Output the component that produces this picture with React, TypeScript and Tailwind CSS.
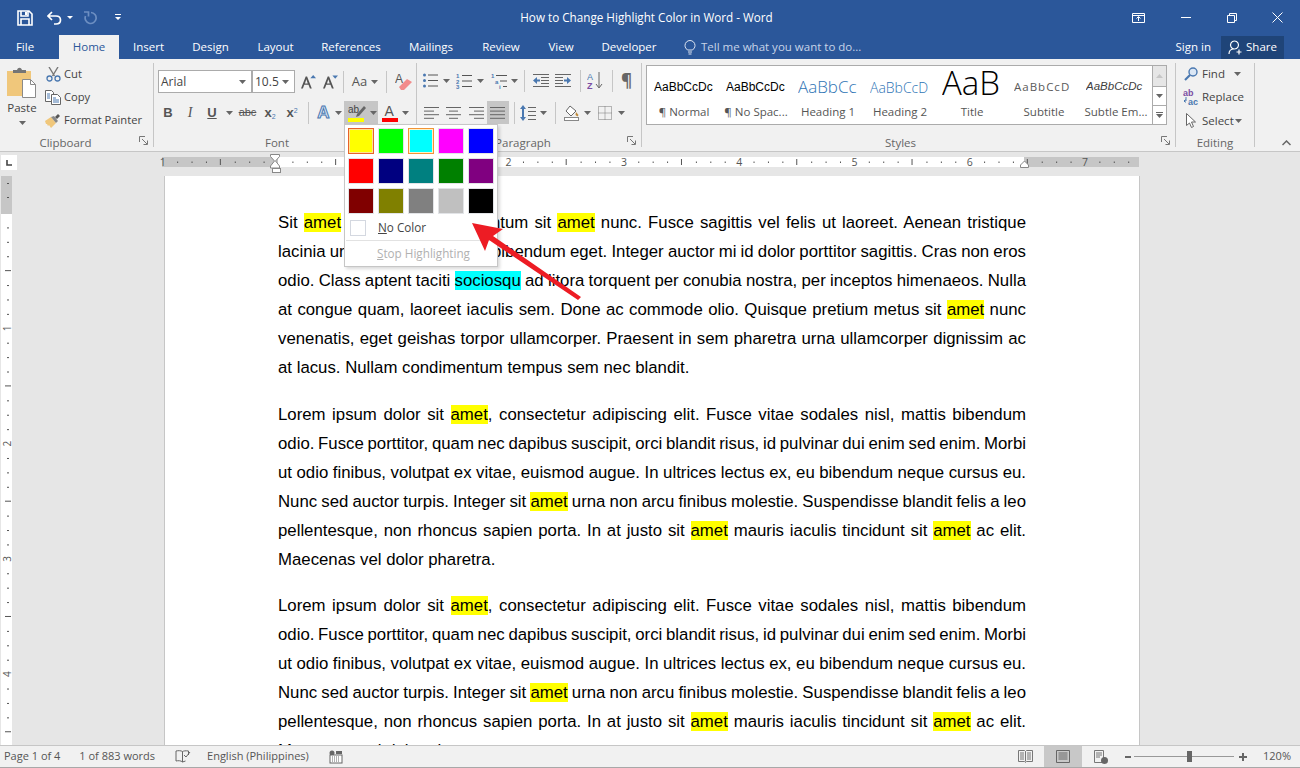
import type { ReactNode } from "react"

const ui = "font-['Open_Sans',sans-serif]"

const tabs = [
  { label: "Insert", w: "w-[59px]" },
  { label: "Design", w: "w-[65px]" },
  { label: "Layout", w: "w-[65px]" },
  { label: "References", w: "w-[86px]" },
  { label: "Mailings", w: "w-[74px]" },
  { label: "Review", w: "w-[66px]" },
  { label: "View", w: "w-[54px]" },
  { label: "Developer", w: "w-[82px]" },
]

const swatches = [
  "#ffff00", "#00ff00", "#00ffff", "#ff00ff", "#0000ff",
  "#ff0000", "#000080", "#008080", "#008000", "#800080",
  "#800000", "#808000", "#808080", "#c0c0c0", "#000000",
]

const para1 = [
  "Sit amet massa an condimentum sit amet nunc. Fusce sagittis vel felis ut laoreet. Aenean tristique",
  "lacinia urna, vitae dictum est bibendum eget. Integer auctor mi id dolor porttitor sagittis. Cras non eros",
  "odio. Class aptent taciti sociosqu ad litora torquent per conubia nostra, per inceptos himenaeos. Nulla",
  "at congue quam, laoreet iaculis sem. Done ac commode olio. Quisque pretium metus sit amet nunc",
  "venenatis, eget geishas torpor ullamcorper. Praesent in sem pharetra urna ullamcorper dignissim ac",
  "at lacus. Nullam condimentum tempus sem nec blandit.",
]

const para2 = [
  "Lorem ipsum dolor sit amet, consectetur adipiscing elit. Fusce vitae sodales nisl, mattis bibendum",
  "odio. Fusce porttitor, quam nec dapibus suscipit, orci blandit risus, id pulvinar dui enim sed enim. Morbi",
  "ut odio finibus, volutpat ex vitae, euismod augue. In ultrices lectus ex, eu bibendum neque cursus eu.",
  "Nunc sed auctor turpis. Integer sit amet urna non arcu finibus molestie. Suspendisse blandit felis a leo",
  "pellentesque, non rhoncus sapien porta. In at justo sit amet mauris iaculis tincidunt sit amet ac elit.",
  "Maecenas vel dolor pharetra.",
]

function Caret({ className = "" }: { className?: string }) {
  return (
    <svg width="7" height="4" viewBox="0 0 7 4" className={className}>
      <path d="M0 0h7L3.5 4z" fill="#666" />
    </svg>
  )
}

function Sep() {
  return <div className="mx-[5px] h-[22px] w-px bg-[#c6c6c6]" />
}

function Launcher() {
  return (
    <svg width="9" height="9" viewBox="0 0 9 9" className="absolute right-[5px] top-[3px]">
      <path d="M0.5 6V.5H6M3 3l5 5M8.5 4.5v4h-4" fill="none" stroke="#777" />
    </svg>
  )
}

function Group({ w, label, labelOffset = "", children }: { w: string; label: string; labelOffset?: string; children: ReactNode }) {
  return (
    <div className={`${w} relative mt-[4px] h-[84px] shrink-0 border-r border-[#c6c6c6]`}>
      <div className="h-[73px]">{children}</div>
      <div className={`${labelOffset} relative h-[14px] text-center text-[11.5px] leading-[14px] text-[#666]`}>
        {label}
      </div>
      {label !== "Editing" && <div className="absolute bottom-0 right-0 h-[14px] w-[14px]"><Launcher /></div>}
    </div>
  )
}

function Slot({ w = "w-[22px]", children }: { w?: string; children: ReactNode }) {
  return <div className={`${w} flex h-[23px] shrink-0 items-center justify-center`}>{children}</div>
}

function SmallRow({ icon, label, h }: { icon: ReactNode; label: string; h: string }) {
  return (
    <div className={`${h} flex items-center`}>
      <div className="flex w-[18px] justify-center">{icon}</div>
      <span className="ml-[2px] text-[11.2px] text-[#444]">{label}</span>
    </div>
  )
}

function PasteIcon() {
  return (
    <svg width="30" height="31" viewBox="0 0 30 31">
      <rect x="0" y="4" width="24" height="25" fill="#f0c77b" />
      <path d="M6 6V3h4c1-3 4-3 5 0h4v3z" fill="#757575" />
      <path d="M15.500 12.500h8l5 5v13h-13z" fill="#fff" stroke="#8a8a8a" />
      <path d="M23.500 12.500v5h5" fill="none" stroke="#8a8a8a" />
    </svg>
  )
}

function ScissorsIcon() {
  return (
    <svg width="15" height="15" viewBox="0 0 15 15">
      <path d="M3 0l5.500 9M12 0L6.500 9" stroke="#777" strokeWidth="1.400" fill="none" />
      <circle cx="3.500" cy="11.500" r="2.500" fill="none" stroke="#4a78b0" strokeWidth="1.300" />
      <circle cx="11.500" cy="11.500" r="2.500" fill="none" stroke="#4a78b0" strokeWidth="1.300" />
    </svg>
  )
}

function CopyIcon() {
  return (
    <svg width="16" height="15" viewBox="0 0 16 15">
      <path d="M.5.500h6l2 2v9H.5z" fill="#fff" stroke="#666" />
      <path d="M6.500 4.500h6l3 3v7h-9z" fill="#fff" stroke="#666" />
      <path d="M2 4h3M2 6h3M2 8h3M8 8h3M8 10h6M8 12h6" stroke="#4a78b0" />
    </svg>
  )
}

function BrushIcon() {
  return (
    <svg width="16" height="15" viewBox="0 0 16 15">
      <path d="M0 8l6-4 5 6-5 5-2-3-1 1-1-2-1 0z" fill="#f0c77b" />
      <path d="M6 4l5 6 2-2-4-5z" fill="#888" />
      <path d="M10 4l3-3 2 2-3 3z" fill="#555" />
    </svg>
  )
}

function FontBox({ w, value }: { w: string; value: string }) {
  return (
    <div className={`${w} flex h-[23px] items-center justify-between border border-[#ababab] bg-white pl-[2px] pr-[5px] text-[12px]`}>
      <span className="text-[#444]">{value}</span>
      <Caret />
    </div>
  )
}

function GrowFont({ up }: { up: boolean }) {
  return (
    <svg width="15" height="16" viewBox="0 0 16 16">
      <path d="M0 15L5 2h1.500l5 13h-2L8 11H3.500L2 15zM4.200 9.500h3L5.700 5z" fill="#555" />
      {up ? <path d="M10 4l3-3.500L16 4z" fill="#4a78b0" /> : <path d="M10 1h6l-3 3.500z" fill="#4a78b0" />}
    </svg>
  )
}

function HighlightIcon() {
  return (
    <svg width="18" height="20" viewBox="0 0 18 20">
      <text x="0" y="10" fontFamily="Liberation Sans, sans-serif" fontSize="10" fill="#444">ab</text>
      <path d="M9 11l7-8 2 2-7 8-3 1z" fill="#666" />
      <rect x="0" y="15" width="16" height="4" fill="#ffff00" />
    </svg>
  )
}

function Lines({ rows, w = 16 }: { rows: [number, number][]; w?: number }) {
  return (
    <svg width={w} height="14" viewBox={`0 0 ${w} 14`}>
      {rows.map(([a, b], i) => (
        <path key={i} d={`M${a} ${1.5 + i * 3.6}H${b}`} stroke="#666" strokeWidth="1" />
      ))}
    </svg>
  )
}

function BulletsIcon() {
  return (
    <svg width="15" height="15" viewBox="0 0 15 15">
      <circle cx="1.500" cy="2" r="1.500" fill="#4a78b0" /><circle cx="1.500" cy="7.500" r="1.500" fill="#4a78b0" /><circle cx="1.500" cy="13" r="1.500" fill="#4a78b0" />
      <path d="M5 2h10M5 7.500h10M5 13h10" stroke="#555" />
    </svg>
  )
}

function NumberIcon() {
  return (
    <svg width="16" height="16" viewBox="0 0 16 16">
      <text x="0" y="5" fontSize="6" fontWeight="700" fill="#4a78b0" fontFamily="Liberation Sans">1</text>
      <text x="0" y="10.500" fontSize="6" fontWeight="700" fill="#4a78b0" fontFamily="Liberation Sans">2</text>
      <text x="0" y="16" fontSize="6" fontWeight="700" fill="#4a78b0" fontFamily="Liberation Sans">3</text>
      <path d="M6 2.500h10M6 8h10M6 13.500h10" stroke="#555" />
    </svg>
  )
}

function MultiIcon() {
  return (
    <svg width="16" height="16" viewBox="0 0 16 16">
      <text x="0" y="5" fontSize="6" fontWeight="700" fill="#4a78b0" fontFamily="Liberation Sans">1</text>
      <text x="4" y="10.500" fontSize="6" fontWeight="700" fill="#4a78b0" fontFamily="Liberation Sans">a</text>
      <text x="8" y="16" fontSize="6" fontWeight="700" fill="#4a78b0" fontFamily="Liberation Sans">i</text>
      <path d="M5 2.500h11M9 8h7M12 13.500h4" stroke="#555" />
    </svg>
  )
}

function IndentIcon({ flip }: { flip?: boolean }) {
  return (
    <svg width="16" height="13" viewBox="0 0 16 13" className={flip ? "-scale-x-100" : ""}>
      <path d="M0 .500h16M8 3.500h8M8 6.500h8M8 9.500h8M0 12.500h16" stroke="#666" />
      <path d="M0 6.500L4 3v2.500h3v2H4V10z" fill="#4a78b0" />
    </svg>
  )
}

function SortIcon() {
  return (
    <svg width="16" height="17" viewBox="0 0 16 17">
      <text x="0" y="7.500" fontSize="9" fill="#4a78b0" fontFamily="Liberation Sans">A</text>
      <text x="0" y="16.500" fontSize="9" fontWeight="700" fill="#7b4ea3" fontFamily="Liberation Sans">Z</text>
      <path d="M12 0v15M9 12l3 4 3-4" fill="none" stroke="#666" />
    </svg>
  )
}

function SpacingIcon() {
  return (
    <svg width="16" height="16" viewBox="0 0 16 16">
      <path d="M3 0L0 4h2v8H0l3 4 3-4H4V4h2z" fill="#4a78b0" />
      <path d="M8 2.500h8M8 6.500h8M8 10.500h8M8 14.500h8" stroke="#666" />
    </svg>
  )
}

function ShadingIcon() {
  return (
    <svg width="17" height="16" viewBox="0 0 17 16">
      <path d="M7 1l6 5-5 5-5-5z" fill="#fff" stroke="#666" />
      <path d="M13 7l2.500 3-1 1.500-2-1.500z" fill="#c08a3a" />
      <rect x="1.500" y="12.500" width="14" height="3" fill="#fff" stroke="#888" />
    </svg>
  )
}

function BordersIcon() {
  return (
    <svg width="14" height="14" viewBox="0 0 14 14">
      <path d="M.5.500h13v13H.5zM7 .500v13M.5 7h13" fill="none" stroke="#777" strokeDasharray="1 1" />
    </svg>
  )
}

function EraserIcon() {
  return (
    <svg width="17" height="17" viewBox="0 0 17 17">
      <text x="0" y="10" fontSize="12" fill="#555" fontFamily="Liberation Sans">A</text>
      <path d="M4 14l8-8 5 3-8 8H6z" fill="#f28b8b" />
    </svg>
  )
}

function StylePreview({ sample, label, className }: { sample: string; label: string; className: string }) {
  return (
    <div className="flex w-[72px] shrink-0 flex-col items-center">
      <div className={`flex h-[36px] w-[60px] items-center justify-start overflow-hidden whitespace-nowrap ${className}`}>
        {sample}
      </div>
      <div className="mt-[-1px] w-[72px] text-center text-[11.5px] leading-[16px] text-[#555]">{label}</div>
    </div>
  )
}

function ActionRow({ icon, label, caret, h }: { icon: ReactNode; label: string; caret?: string; h: string }) {
  return (
    <div className={`${h} flex items-center`}>
      <div className="ml-[6px] flex w-[18px] justify-center">{icon}</div>
      <span className="ml-[2px] text-[11.5px] text-[#444]">{label}</span>
      {caret && <Caret className={caret} />}
    </div>
  )
}

function HorizontalRuler() {
  const ticks = Array.from({ length: 68 }, (_, i) => i - 7)
  return (
    <svg width="1300" height="24" viewBox="0 0 1300 24" className="absolute left-0 top-0">
      <rect x="162" y="5" width="977" height="10" fill="#c6c6c6" />
      <rect x="278" y="5" width="746" height="10" fill="#fff" />
      {ticks.map(i => {
        const x = 278 + i * 14.41
        if (i % 8 === 0 || x > 1135) return null
        return i % 4 === 0
          ? <path key={i} d={`M${x} 7v6`} stroke="#555" />
          : <rect key={i} x={x} y="9.500" width="1" height="1.500" fill="#555" />
      })}
      {[-1, 2, 3, 4, 5, 6, 7].map(n => (
        <text key={n} x={278 + n * 115.3} y="14" textAnchor="middle" fontSize="10.500" fill="#555" fontFamily="Open Sans, sans-serif">
          {Math.abs(n)}
        </text>
      ))}
      <path d="M270.500 2.500h9v2l-4 4.500 4 5v2h-9v-2l4-5-4-4.500z" fill="#fff" stroke="#888" />
      <rect x="273.500" y="19.500" width="8" height="4" fill="#fff" stroke="#888" transform="translate(-1 -3)" />
      <path d="M1024.500 9l4 4v2.500h-8V13z" fill="#fff" stroke="#888" />
    </svg>
  )
}

function VerticalRuler() {
  const ticks = Array.from({ length: 40 }, (_, i) => i)
  return (
    <svg width="12" height="569" viewBox="0 0 12 569" className="shrink-0">
      <rect x="1" y="0" width="11" height="38" fill="#c6c6c6" />
      <rect x="1" y="38" width="11" height="531" fill="#fff" />
      {ticks.map(i => {
        const y = 37 + i * 14.41
        if (i % 8 === 0) return null
        return i % 4 === 0
          ? <path key={i} d={`M5 ${y}h6`} stroke="#555" />
          : <rect key={i} x="7" y={y} width="2" height="1" fill="#555" />
      })}
      <rect x="7" y="7" width="2" height="1" fill="#555" />
      <rect x="7" y="21" width="2" height="1" fill="#555" />
      {[1, 2, 3, 4].map(n => (
        <text key={n} x="0" y="0" textAnchor="middle" fontSize="10" fill="#555" fontFamily="Open Sans, sans-serif"
          transform={`translate(11 ${37 + n * 115.3}) rotate(-90)`}>
          {n}
        </text>
      ))}
    </svg>
  )
}

function DocLine({ text, last }: { text: string; last?: boolean }) {
  const parts = text.split(/\b(amet|sociosqu)\b/)
  return (
    <div className={last ? "h-[29px]" : "h-[29px] text-justify [text-align-last:justify] [word-spacing:-2px]"}>
      {parts.map((p, i) =>
        p === "amet" ? <span key={i} className="bg-[#ffff00]">{p}</span>
        : p === "sociosqu" ? <span key={i} className="bg-[#00ffff]">{p}</span>
        : <span key={i}>{p}</span>,
      )}
    </div>
  )
}

function Paragraph({ lines, className = "" }: { lines: string[]; className?: string }) {
  return (
    <div className={className}>
      {lines.map((l, i) => <DocLine key={i} text={l} last={i === lines.length - 1} />)}
    </div>
  )
}

function ColorMenu() {
  return (
    <div className="absolute left-0 top-[23px] z-30 h-[143px] w-[154px] border border-[#c6c6c6] bg-white shadow-[2px_2px_3px_rgba(0,0,0,0.15)]">
      <div className="grid grid-cols-[repeat(5,26px)] gap-[4px] pl-[3px] pt-[3px]">
        {swatches.map((c, i) => (
          <div
            key={c}
            style={{ backgroundColor: c }}
            className={
              i === 0 ? "h-[26px] w-[26px] border border-[#e8622a] shadow-[inset_0_0_0_1px_#ffe294]"
              : i === 2 ? "h-[26px] w-[26px] border border-[#f29436] shadow-[inset_0_0_0_1px_#fff2c8]"
              : "h-[26px] w-[26px] border border-[#e2e4e7]"
            }
          />
        ))}
      </div>
      <div className="flex h-[26px] items-center pl-[5px] pt-[2px]">
        <div className="h-[16px] w-[16px] border border-[#d4d8e0] bg-white" />
        <span className="ml-[12px] text-[11.7px] text-[#444]"><u>N</u>o Color</span>
      </div>
      <div className="mx-[1px] h-px bg-[#e2e2e2]" />
      <div className="flex h-[26px] items-center pl-[32px] text-[11.7px] text-[#b1b1b1]"><span><u>S</u>top Highlighting</span></div>
    </div>
  )
}

export default function App() {
  return (
    <div className={`${ui} relative flex h-[768px] w-[1300px] flex-col overflow-hidden bg-[#e6e6e6]`}>
      {/* title bar */}
      <div className="relative flex h-[35px] shrink-0 items-center bg-[#2b579a] text-white">
        <div className="ml-[17px] flex items-center">
          <svg width="16" height="16" viewBox="0 0 16 16">
            <path d="M1 1h11l3 3v11H1zM4 1v5h7V1M4 15V9h8v6" fill="none" stroke="#fff" strokeWidth="1.600" />
            <rect x="8" y="2" width="2" height="3" fill="#fff" />
          </svg>
          <svg width="15" height="14" viewBox="0 0 15 14" className="ml-[14px]">
            <path d="M5 1L1 5l4 4M1 5h8c6 0 6 8 0 8H7" fill="none" stroke="#fff" strokeWidth="1.700" />
          </svg>
          <svg width="6" height="3" viewBox="0 0 6 3" className="ml-[5px]"><path d="M0 0h6L3 3z" fill="#fff" /></svg>
          <svg width="14" height="14" viewBox="0 0 14 14" className="ml-[10px]">
            <path d="M8 1.500A5.500 5.500 0 1 1 2.500 5M1 1h4.500v4.500" fill="none" stroke="#6d8fc2" strokeWidth="1.700" />
          </svg>
          <svg width="6" height="7" viewBox="0 0 6 7" className="ml-[18px]"><path d="M0 0h6v1H0zM0 3h6L3 6z" fill="#fff" /></svg>
        </div>
        <div className="absolute left-[0] w-[1293px] text-center text-[11.700px]">How to Change Highlight Color in Word - Word</div>
        <div className="ml-auto flex items-center pr-[17px]">
          <svg width="13" height="10" viewBox="0 0 13 10">
            <path d="M.5.500h12v9H.5zM1 2.500h11M6.500 8V4M4.500 5.500l2-2 2 2" fill="none" stroke="#fff" />
          </svg>
          <div className="ml-[36px] h-px w-[10px] bg-white" />
          <svg width="10" height="10" viewBox="0 0 10 10" className="ml-[36px]">
            <path d="M.5 2.500h7v7h-7zM2.500 2.500v-2h7v7h-2" fill="none" stroke="#fff" />
          </svg>
          <svg width="11" height="11" viewBox="0 0 11 11" className="ml-[35px]">
            <path d="M.5.500l10 10M10.500.500l-10 10" stroke="#fff" />
          </svg>
        </div>
      </div>

      {/* tabs */}
      <div className="flex h-[24px] shrink-0 items-stretch bg-[#2b579a] text-[11.5px] text-white">
        <div className="flex w-[59px] items-center justify-center pr-[9px]">File</div>
        <div className="flex w-[60px] items-center justify-center bg-[#f1f1f1] text-[#2b579a]">Home</div>
        {tabs.map(t => (
          <div key={t.label} className={`${t.w} flex items-center justify-center`}>{t.label}</div>
        ))}
        <div className="ml-[14px] flex items-center text-[#c7d4e8]">
          <svg width="12" height="15" viewBox="0 0 12 15">
            <path d="M3.500 10C2 8.500 1 7.500 1 5.500a5 5 0 0 1 10 0c0 2-1 3-2.500 4.500zM4 12h4M4.500 14h3" fill="none" stroke="#dfe6f2" />
          </svg>
          <span className="ml-[5px]">Tell me what you want to do...</span>
        </div>
        <div className="ml-auto flex items-center pr-[16px]">
          <span>Sign in</span>
          <div className="ml-[10px] flex h-[23px] w-[63px] items-center justify-center bg-[#1f4478]">
            <svg width="15" height="15" viewBox="0 0 15 15">
              <path d="M1 14c0-3 2-5 5-5M6.500 9a4 4 0 1 0-.01 0M11 9.500v5M8.500 12h5" fill="none" stroke="#fff" strokeWidth="1.200" />
            </svg>
            <span className="ml-[3px]">Share</span>
          </div>
        </div>
      </div>

      {/* ribbon */}
      <div className="relative z-20 flex h-[93px] shrink-0 border-b border-[#c6c6c6] bg-[#f1f1f1]">
        <Group w="w-[154px]" label="Clipboard" labelOffset="-translate-x-[11px]">
          <div className="flex">
            <div className="flex w-[44px] flex-col items-center pt-[4px]">
              <PasteIcon />
              <span className="mt-[2px] text-[11.5px] leading-[16px] text-[#444]">Paste</span>
              <Caret className="mt-[5px]" />
            </div>
            <div>
              <SmallRow h="h-[22px]" icon={<ScissorsIcon />} label="Cut" />
              <SmallRow h="h-[24px]" icon={<CopyIcon />} label="Copy" />
              <SmallRow h="h-[23px]" icon={<BrushIcon />} label="Format Painter" />
            </div>
          </div>
        </Group>

        <Group w="w-[263px]" label="Font" labelOffset="-translate-x-[8px]">
          <div className="flex items-center pl-[4px] pt-[7px]">
            <FontBox w="w-[94px]" value="Arial" />
            <FontBox w="w-[43px]" value="10.5" />
            <div className="ml-[6px]"><GrowFont up /></div>
            <div className="ml-[7px]"><GrowFont up={false} /></div>
            <Sep />
            <div className="flex w-[32px] items-center justify-center gap-[4px] text-[13px] text-[#555]">Aa<Caret /></div>
            <Sep />
            <div className="ml-[3px]"><EraserIcon /></div>
          </div>
          <div className="mt-[8px] flex h-[23px] items-center pl-[3px] text-[#555]">
            <Slot><span className="font-['Liberation_Sans'] text-[13px] font-bold">B</span></Slot>
            <Slot><span className="font-['Liberation_Serif'] text-[14px] italic">I</span></Slot>
            <Slot><span className="font-['Liberation_Sans'] text-[13px] font-bold underline">U</span></Slot>
            <Slot w="w-[13px]"><Caret /></Slot>
            <Slot w="w-[23px]"><span className="font-['Liberation_Sans'] text-[11px] line-through">abc</span></Slot>
            <Slot><span className="font-['Liberation_Sans'] text-[13px] font-bold">x<sub className="text-[7px] font-normal text-[#4a78b0]">2</sub></span></Slot>
            <Slot><span className="font-['Liberation_Sans'] text-[13px] font-bold">x<sup className="text-[7px] font-normal text-[#4a78b0]">2</sup></span></Slot>
            <Sep />
            <Slot w="w-[19px]">
              <span className="font-['Liberation_Sans'] text-[17px] font-bold text-[#dce8f6] [-webkit-text-stroke:1px_#4a78b0]">A</span>
            </Slot>
            <Slot w="w-[11px]"><Caret /></Slot>
            <div className="relative flex h-[23px] w-[34px] items-center bg-[#c6c6c6] pl-[4px]">
              <HighlightIcon />
              <Caret className="ml-[4px]" />
              <ColorMenu />
            </div>
            <div className="flex w-[36px] items-center pl-[4px]">
              <svg width="16" height="18" viewBox="0 0 16 18">
                <text x="2.500" y="12" fontSize="14" fill="#555" fontFamily="Liberation Sans">A</text>
                <rect x="0" y="14" width="16" height="4" fill="#ff0000" />
              </svg>
              <Caret className="ml-[4px]" />
            </div>
          </div>
        </Group>

        <Group w="w-[225px]" label="Paragraph" labelOffset="-translate-x-[6px]">
          <div className="flex h-[34px] items-center pl-[6px] pt-[1px]">
            <BulletsIcon />
            <Caret className="ml-[5px]" />
            <div className="ml-[6px]"><NumberIcon /></div>
            <Caret className="ml-[5px]" />
            <div className="ml-[7px]"><MultiIcon /></div>
            <Caret className="ml-[4px]" />
            <div className="ml-[1px]"><Sep /></div>
            <div className="ml-[3px]"><IndentIcon /></div>
            <div className="ml-[6px]"><IndentIcon flip /></div>
            <div className="ml-[4px]"><Sep /></div>
            <div className="ml-[1px]"><SortIcon /></div>
            <div className="ml-[4px]"><Sep /></div>
            <span className="ml-[3px] text-[17px] font-bold leading-none text-[#666]">¶</span>
          </div>
          <div className="mt-[4px] flex h-[23px] items-center pl-[4px]">
            <Slot><Lines rows={[[0, 15], [0, 10], [0, 15], [0, 10]]} /></Slot>
            <Slot><Lines rows={[[0, 15], [3, 12], [0, 15], [3, 12]]} /></Slot>
            <Slot><Lines rows={[[1, 16], [6, 16], [1, 16], [6, 16]]} /></Slot>
            <div className="flex h-[23px] w-[22px] items-center justify-center bg-[#c6c6c6]"><Lines rows={[[0, 15], [0, 15], [0, 15], [0, 15]]} /></div>
            <Sep />
            <SpacingIcon />
            <Caret className="ml-[4px]" />
            <div className="ml-[3px]"><Sep /></div>
            <div className="ml-[2px]"><ShadingIcon /></div>
            <Caret className="ml-[4px]" />
            <div className="ml-[7px]"><BordersIcon /></div>
            <Caret className="ml-[6px]" />
          </div>
        </Group>

        <Group w="w-[534px]" label="Styles" labelOffset="-translate-x-[8px]">
          <div className="pl-[4px] pt-[2px]">
            <div className="flex h-[60px] w-[521px] border border-[#ababab] bg-white">
              <div className="flex min-w-0 flex-1 pl-[1px] pt-[3px]">
                <StylePreview sample="AaBbCcDc" label="¶ Normal" className="font-['Liberation_Sans'] text-[12px] text-black" />
                <StylePreview sample="AaBbCcDc" label="¶ No Spac..." className="font-['Liberation_Sans'] text-[12px] text-black" />
                <StylePreview sample="AaBbCc" label="Heading 1" className="text-[17px] font-light text-[#2e74b5]" />
                <StylePreview sample="AaBbCcD" label="Heading 2" className="text-[14px] font-light text-[#2e74b5]" />
                <StylePreview sample="AaB" label="Title" className="pb-[9px] text-[33px] font-light text-black" />
                <StylePreview sample="AaBbCcD" label="Subtitle" className="text-[11.500px] tracking-[1px] text-[#5a5a5a]" />
                <StylePreview sample="AaBbCcDc" label="Subtle Em..." className="font-['Liberation_Sans'] text-[11.500px] italic text-[#404040]" />
              </div>
              <div className="flex w-[14px] flex-col border-l border-[#ababab]">
                <div className="flex h-[21px] items-center justify-center border-b border-[#ababab] bg-[#e6e6e6]">
                  <svg width="7" height="4" viewBox="0 0 7 4"><path d="M0 4h7L3.500 0z" fill="#c6c6c6" /></svg>
                </div>
                <div className="flex h-[19px] items-center justify-center border-b border-[#ababab]"><Caret /></div>
                <div className="flex flex-1 flex-col items-center justify-center gap-[1px]">
                  <div className="h-px w-[7px] bg-[#666]" />
                  <Caret />
                </div>
              </div>
            </div>
          </div>
        </Group>

        <Group w="w-[79px]" label="Editing">
          <ActionRow h="h-[22px]" icon={
            <svg width="14" height="14" viewBox="0 0 14 14">
              <circle cx="9" cy="5" r="4" fill="#dbe7f5" stroke="#4a78b0" strokeWidth="1.400" />
              <path d="M6 8l-5 5" stroke="#4a78b0" strokeWidth="2.200" />
            </svg>
          } label="Find" caret="ml-[9px]" />
          <ActionRow h="h-[24px]" icon={
            <svg width="16" height="16" viewBox="0 0 16 16">
              <text x="0" y="7" fontSize="9" fontWeight="700" fill="#7b4ea3" fontFamily="Liberation Sans">ab</text>
              <text x="5" y="15.500" fontSize="9" fontWeight="700" fill="#4a78b0" fontFamily="Liberation Sans">ac</text>
              <path d="M3 8v4H1M2.500 10.500L1 12l1.500 1.500" fill="none" stroke="#4a78b0" />
            </svg>
          } label="Replace" />
          <ActionRow h="h-[23px]" icon={
            <svg width="11" height="15" viewBox="0 0 11 15">
              <path d="M.5.500v12l3-2.500 2 4.500 2-1-2-4.500h4z" fill="#fff" stroke="#666" />
            </svg>
          } label="Select" caret="ml-[1px]" />
        </Group>

        <div className="relative flex-1">
          <svg width="9" height="6" viewBox="0 0 9 6" className="absolute bottom-[5px] left-[27px]">
            <path d="M.5 5L4.500 1l4 4" fill="none" stroke="#666" strokeWidth="1.500" />
          </svg>
        </div>
      </div>

      {/* horizontal ruler */}
      <div className="relative h-[24px] shrink-0 bg-[#e6e6e6]">
        <HorizontalRuler />
        <div className="absolute left-[1px] top-[3px] flex h-[15px] w-[16px] items-center justify-center bg-white">
          <svg width="6" height="6" viewBox="0 0 6 6"><path d="M1 0v5h5" fill="none" stroke="#444" strokeWidth="1.600" /></svg>
        </div>
      </div>

      {/* document */}
      <div className="flex min-h-0 flex-1 items-start overflow-hidden">
        <VerticalRuler />
        <div className="ml-[152px] h-full w-[976px] border-x border-[#c6c6c6] bg-white pl-[113px] pr-[113px] pt-[32px] font-['Liberation_Sans',sans-serif] text-[16.800px] leading-[29px] text-black">
          <Paragraph lines={para1} />
          <Paragraph lines={para2} className="mt-[18px]" />
          <Paragraph lines={para2} className="mt-[17px]" />
        </div>
      </div>

      {/* status bar */}
      <div className="relative z-10 flex h-[23px] shrink-0 items-center border-y border-b-[#a8a8a8] border-t-[#c6c6c6] bg-[#f1f1f1] text-[11px] text-[#555]">
        <span className="ml-[4px]">Page 1 of 4</span>
        <span className="ml-[19px]">1 of 883 words</span>
        <svg width="16" height="13" viewBox="0 0 16 13" className="ml-[20px]">
          <path d="M7.500 1.500C6 .500 3 .500 1 1v10c2-.5 5-.5 6.500 1zM7.500 1.500c1-.5 3-1 6-.5v4M7.500 5v7l3-1M9 5l2 2 4-5" fill="none" stroke="#666" />
        </svg>
        <span className="ml-[16px]">English (Philippines)</span>
        <svg width="14" height="14" viewBox="0 0 14 14" className="ml-[20px]">
          <circle cx="3" cy="3" r="2.500" fill="#666" />
          <rect x="1" y="5" width="12" height="8" fill="#fff" stroke="#666" />
          <path d="M3 7h8M3 9h8M3 11h8" stroke="#666" strokeDasharray="1 1" />
          <rect x="7" y="1" width="6" height="3" fill="#666" />
        </svg>
        <div className="ml-auto flex h-full items-center pr-[9px]">
          <svg width="15" height="13" viewBox="0 0 15 13">
            <path d="M.5.500h6l1 1 1-1h6v11h-6l-1 1-1-1h-6zM7.500 1.500v10M2 3h4M2 5h4M2 7h4M2 9h4M9 3h4M9 5h4M9 7h4M9 9h4" fill="none" stroke="#777" />
          </svg>
          <div className="ml-[11px] flex h-full w-[38px] items-center justify-center bg-[#c8c8c8]">
            <svg width="14" height="13" viewBox="0 0 14 13">
              <path d="M.5.500h13v12H.5zM2.500 3h9M2.500 5h9M2.500 7h9M2.500 9h9" fill="none" stroke="#666" />
            </svg>
          </div>
          <svg width="14" height="14" viewBox="0 0 14 14" className="ml-[12px]">
            <path d="M.5.500h9v12h-9zM2 3h6M2 5h6M2 7h4" fill="none" stroke="#777" />
            <circle cx="10.500" cy="10.500" r="3.500" fill="#666" />
          </svg>
          <div className="ml-[17px] h-[2px] w-[6px] bg-[#666]" />
          <div className="relative ml-[3px] h-px w-[100px] bg-[#999]">
            <div className="absolute left-[53px] top-[-5px] h-[11px] w-[5px] bg-[#666]" />
          </div>
          <svg width="8" height="8" viewBox="0 0 8 8" className="ml-[5px]"><path d="M3 0h2v3h3v2H5v3H3V5H0V3h3z" fill="#666" /></svg>
          <span className="ml-[16px]">120%</span>
        </div>
      </div>

      {/* red arrow over the page */}
      <svg width="1300" height="768" viewBox="0 0 1300 768" className="pointer-events-none absolute left-0 top-0 z-40">
        <path d="M472 223L503 229 493 236 581 297 578 300 489 240 485 251z" fill="#ed1c24" />
      </svg>
    </div>
  )
}
